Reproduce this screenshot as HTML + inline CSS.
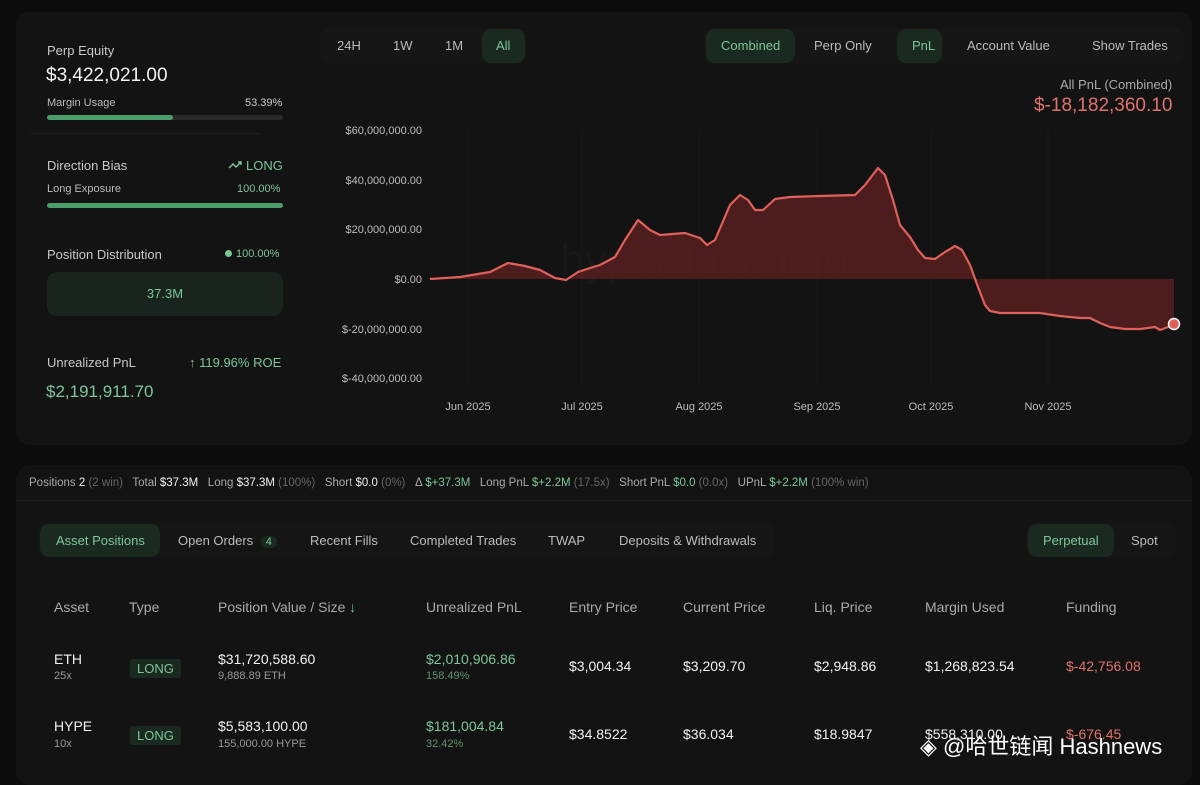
<!DOCTYPE html>
<html><head><meta charset="utf-8"><style>
*{margin:0;padding:0;box-sizing:border-box}
body{width:1200px;height:769px;background:#0c0c0c;font-family:"Liberation Sans",sans-serif;color:#d6d6d6;position:relative;overflow:hidden}
.a{position:absolute;white-space:nowrap}
.card{position:absolute;background:#131313;border-radius:14px}
.g{color:#7cc69a}.r{color:#e0736a}.m{color:#9a9a9a}.w{color:#f2f2f2}
.pill{position:absolute;background:#1a2a21;border-radius:9px}
.bar{position:absolute;height:5px;border-radius:3px;background:#2a2a2a}
.f11{font-size:11px}.f13{font-size:13px}.f14{font-size:14px}
</style></head><body>
<div class="card" style="left:16px;top:12px;width:1176px;height:433px"></div>
<div class="a f13" style="left:47px;top:43px;color:#c8c8c8">Perp Equity</div>
<div class="a w" style="left:46px;top:65px;font-size:19px">$3,422,021.00</div>
<div class="a f11" style="left:47px;top:97px;color:#bbb">Margin Usage</div>
<div class="a f11" style="left:245px;top:97px;color:#ccc">53.39%</div>
<div class="bar" style="left:47px;top:115px;width:236px"></div>
<div class="bar" style="left:47px;top:115px;width:126px;background:#4e9c6c"></div>
<div class="a" style="left:30px;top:133px;width:230px;height:1px;background:#1e1e1e"></div>
<div class="a f13" style="left:47px;top:158px;color:#c8c8c8">Direction Bias</div>
<div class="a f13 g" style="left:228px;top:158px"><svg width="14" height="10" viewBox="0 0 14 10" style="margin-right:4px"><path d="M1 8l4-4 3 3 5-5M10 2h3v3" stroke="#7cc69a" stroke-width="1.4" fill="none"/></svg>LONG</div>
<div class="a f11" style="left:47px;top:183px;color:#bbb">Long Exposure</div>
<div class="a f11 g" style="left:237px;top:183px">100.00%</div>
<div class="bar" style="left:47px;top:203px;width:236px;background:#4e9c6c"></div>
<div class="a f13" style="left:47px;top:247px;color:#c8c8c8">Position Distribution</div>
<div class="a f11 g" style="left:225px;top:248px"><span style="display:inline-block;width:7px;height:7px;border-radius:50%;background:#7cc69a;margin-right:4px"></span>100.00%</div>
<div class="a f13 g" style="left:47px;top:272px;width:236px;height:44px;background:#1a241e;border-radius:10px;text-align:center;line-height:44px">37.3M</div>
<div class="a f13" style="left:47px;top:355px;color:#c8c8c8">Unrealized PnL</div>
<div class="a f13 g" style="left:189px;top:355px">↑ 119.96% ROE</div>
<div class="a g" style="left:46px;top:382px;font-size:17px">$2,191,911.70</div>
<div class="a" style="left:320px;top:28px;width:207px;height:36px;background:#161616;border-radius:10px"></div>
<div class="pill" style="left:482px;top:29px;width:43px;height:34px"></div>
<div class="a f13" style="left:337px;top:38px;color:#bbb">24H</div>
<div class="a f13" style="left:393px;top:38px;color:#bbb">1W</div>
<div class="a f13" style="left:445px;top:38px;color:#bbb">1M</div>
<div class="a f13 g" style="left:496px;top:38px">All</div>
<div class="a" style="left:704px;top:28px;width:480px;height:36px;background:#161616;border-radius:10px"></div>
<div class="pill" style="left:706px;top:29px;width:89px;height:34px"></div>
<div class="pill" style="left:897px;top:29px;width:45px;height:34px"></div>
<div class="a f13 g" style="left:721px;top:38px">Combined</div>
<div class="a f13" style="left:814px;top:38px;color:#bbb">Perp Only</div>
<div class="a f13 g" style="left:912px;top:38px">PnL</div>
<div class="a f13" style="left:967px;top:38px;color:#bbb">Account Value</div>
<div class="a f13" style="left:1092px;top:38px;color:#bbb">Show Trades</div>
<div class="a f13" style="left:1060px;top:77px;color:#aaa">All PnL (Combined)</div>
<div class="a r" style="left:1034px;top:95px;font-size:19px">$-18,182,360.10</div>
<svg class="a" style="left:0;top:0" width="1200" height="445">
<g stroke="#191919" stroke-width="1">
<line x1="468" y1="130" x2="468" y2="385"/><line x1="582" y1="130" x2="582" y2="385"/><line x1="699" y1="130" x2="699" y2="385"/><line x1="817" y1="130" x2="817" y2="385"/><line x1="931" y1="130" x2="931" y2="385"/><line x1="1048" y1="130" x2="1048" y2="385"/>
</g>
<text x="560" y="275" font-family="Liberation Sans" font-size="44" fill="#181818">hyperdash.info</text>
<g font-family="Liberation Sans" font-size="11" fill="#bdbdbd" text-anchor="end">
<text x="422" y="134">$60,000,000.00</text><text x="422" y="184">$40,000,000.00</text><text x="422" y="233">$20,000,000.00</text><text x="422" y="283">$0.00</text><text x="422" y="333">$-20,000,000.00</text><text x="422" y="382">$-40,000,000.00</text>
</g>
<g font-family="Liberation Sans" font-size="11" fill="#bdbdbd" text-anchor="middle">
<text x="468" y="410">Jun 2025</text><text x="582" y="410">Jul 2025</text><text x="699" y="410">Aug 2025</text><text x="817" y="410">Sep 2025</text><text x="931" y="410">Oct 2025</text><text x="1048" y="410">Nov 2025</text>
</g>
<polygon fill="#5c2020" fill-opacity="0.8" points="430,279 460,277 490,272 508,263 525,266 540,270 555,278 566,280 578,272 590,268 600,265 615,257 625,240 638,220 650,230 660,235 685,233 700,238 707,245 715,240 730,205 740,195 748,200 755,210 763,210 775,199 790,197 820,196 855,195 865,185 878,168 885,175 893,200 900,225 910,237 918,250 925,258 935,259 945,252 955,246 962,250 970,265 978,287 985,305 990,311 1000,313 1040,313 1060,316 1080,318 1090,318 1100,323 1110,327 1125,329 1140,329 1155,327 1160,330 1168,327 1174,324 1174,279"/>
<polyline fill="none" stroke="#e0605a" stroke-width="2.2" stroke-linejoin="round" points="430,279 460,277 490,272 508,263 525,266 540,270 555,278 566,280 578,272 590,268 600,265 615,257 625,240 638,220 650,230 660,235 685,233 700,238 707,245 715,240 730,205 740,195 748,200 755,210 763,210 775,199 790,197 820,196 855,195 865,185 878,168 885,175 893,200 900,225 910,237 918,250 925,258 935,259 945,252 955,246 962,250 970,265 978,287 985,305 990,311 1000,313 1040,313 1060,316 1080,318 1090,318 1100,323 1110,327 1125,329 1140,329 1155,327 1160,330 1168,327 1174,324"/>
<circle cx="1174" cy="324" r="5.5" fill="#e0605a" stroke="#fff" stroke-width="1.5"/>
</svg>
<div class="card" style="left:16px;top:465px;width:1176px;height:320px"></div>
<div class="a" style="left:16px;top:500px;width:1176px;height:1px;background:#1c1c1c"></div>
<div class="a" style="left:29px;top:477px;color:#aaa;font-size:11.5px">Positions <span class="w">2</span> <span style="color:#666">(2 win)</span> &nbsp; Total <span class="w">$37.3M</span> &nbsp; Long <span class="w">$37.3M</span> <span style="color:#666">(100%)</span> &nbsp; Short <span class="w">$0.0</span> <span style="color:#666">(0%)</span> &nbsp; Δ <span class="g">$+37.3M</span> &nbsp; Long PnL <span class="g">$+2.2M</span> <span style="color:#666">(17.5x)</span> &nbsp; Short PnL <span class="g">$0.0</span> <span style="color:#666">(0.0x)</span> &nbsp; UPnL <span class="g">$+2.2M</span> <span style="color:#666">(100% win)</span></div>
<div class="a" style="left:38px;top:522px;width:736px;height:36px;background:#151515;border-radius:10px"></div>
<div class="pill" style="left:40px;top:524px;width:120px;height:33px"></div>
<div class="a f13 g" style="left:56px;top:533px">Asset Positions</div>
<div class="a f13" style="left:178px;top:533px;color:#bbb">Open Orders <span style="display:inline-block;background:#1a2a21;color:#7cc69a;border-radius:9px;padding:0 5px;font-size:11px;margin-left:4px">4</span></div>
<div class="a f13" style="left:310px;top:533px;color:#bbb">Recent Fills</div>
<div class="a f13" style="left:410px;top:533px;color:#bbb">Completed Trades</div>
<div class="a f13" style="left:548px;top:533px;color:#bbb">TWAP</div>
<div class="a f13" style="left:619px;top:533px;color:#bbb">Deposits &amp; Withdrawals</div>
<div class="a" style="left:1026px;top:522px;width:150px;height:36px;background:#151515;border-radius:10px"></div>
<div class="pill" style="left:1028px;top:524px;width:86px;height:33px"></div>
<div class="a f13 g" style="left:1043px;top:533px">Perpetual</div>
<div class="a f13" style="left:1131px;top:533px;color:#bbb">Spot</div>
<div class="a f14" style="top:599px;left:54px;color:#aaa">Asset</div>
<div class="a f14" style="top:599px;left:129px;color:#aaa">Type</div>
<div class="a f14" style="top:599px;left:218px;color:#aaa">Position Value / Size <span class="g">↓</span></div>
<div class="a f14" style="top:599px;left:426px;color:#aaa">Unrealized PnL</div>
<div class="a f14" style="top:599px;left:569px;color:#aaa">Entry Price</div>
<div class="a f14" style="top:599px;left:683px;color:#aaa">Current Price</div>
<div class="a f14" style="top:599px;left:814px;color:#aaa">Liq. Price</div>
<div class="a f14" style="top:599px;left:925px;color:#aaa">Margin Used</div>
<div class="a f14" style="top:599px;left:1066px;color:#aaa">Funding</div>
<div class="a f14 w" style="top:651px;left:54px">ETH</div><div class="a f11 m" style="top:670px;left:54px">25x</div>
<div class="a f13 g" style="top:659px;left:130px;background:#1a2a21;padding:2px 7px;border-radius:3px">LONG</div>
<div class="a f14 w" style="top:651px;left:218px">$31,720,588.60</div><div class="a f11 m" style="top:670px;left:218px">9,888.89 ETH</div>
<div class="a f14 g" style="top:651px;left:426px">$2,010,906.86</div><div class="a f11 g" style="top:670px;left:426px;opacity:.7">158.49%</div>
<div class="a f14 w" style="top:658px;left:569px">$3,004.34</div>
<div class="a f14 w" style="top:658px;left:683px">$3,209.70</div>
<div class="a f14 w" style="top:658px;left:814px">$2,948.86</div>
<div class="a f14 w" style="top:658px;left:925px">$1,268,823.54</div>
<div class="a f14 r" style="top:658px;left:1066px">$-42,756.08</div>
<div class="a f14 w" style="top:718px;left:54px">HYPE</div><div class="a f11 m" style="top:738px;left:54px">10x</div>
<div class="a f13 g" style="top:726px;left:130px;background:#1a2a21;padding:2px 7px;border-radius:3px">LONG</div>
<div class="a f14 w" style="top:718px;left:218px">$5,583,100.00</div><div class="a f11 m" style="top:738px;left:218px">155,000.00 HYPE</div>
<div class="a f14 g" style="top:718px;left:426px">$181,004.84</div><div class="a f11 g" style="top:738px;left:426px;opacity:.7">32.42%</div>
<div class="a f14 w" style="top:726px;left:569px">$34.8522</div>
<div class="a f14 w" style="top:726px;left:683px">$36.034</div>
<div class="a f14 w" style="top:726px;left:814px">$18.9847</div>
<div class="a f14 w" style="top:726px;left:925px">$558,310.00</div>
<div class="a f14 r" style="top:726px;left:1066px">$-676.45</div>
<div class="a" style="left:920px;top:729px;font-size:22px;color:#fff;font-family:'Liberation Sans','Noto Sans CJK SC',sans-serif">◈ @哈世链闻 Hashnews</div>
</body></html>
